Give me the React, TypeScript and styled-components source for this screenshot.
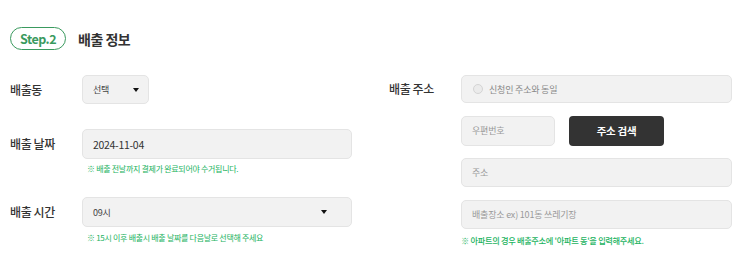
import React from "react";
import styled, { createGlobalStyle } from "styled-components";

const Global = createGlobalStyle`
  html, body { margin: 0; padding: 0; background: #fff; }
  body { font-family: "Noto Sans CJK KR", "Noto Sans", sans-serif; color: #333; }
  * { box-sizing: border-box; }
`;

const Page = styled.div`
  width: 750px;
  height: 258px;
  padding: 27px 18px 0 10px;
`;

const Header = styled.div`
  display: flex;
  align-items: center;
  gap: 12px;
  height: 23px;
`;

const StepPill = styled.div`
  width: 56px;
  height: 23px;
  border: 1.5px solid #3a9a5e;
  border-radius: 12px;
  color: #3a9a5e;
  font-size: 12.5px;
  font-weight: 600;
  letter-spacing: -0.5px;
  display: flex;
  align-items: center;
  justify-content: center;
`;

const Title = styled.h2`
  margin: 0;
  font-size: 14px;
  font-weight: 700;
  letter-spacing: -0.5px;
  color: #333;
`;

const Body = styled.div`
  margin-top: 25px;
  display: grid;
  grid-template-columns: 342px 343px;
  column-gap: 37px;
`;

const Column = styled.div`
  display: flex;
  flex-direction: column;
`;

const Row = styled.div<{ $mt?: number }>`
  display: flex;
  align-items: flex-start;
  margin-top: ${(p) => p.$mt ?? 0}px;
`;

const Label = styled.div<{ $h: number }>`
  width: 72px;
  flex: none;
  height: ${(p) => p.$h}px;
  line-height: ${(p) => p.$h}px;
  font-size: 12px;
  font-weight: 500;
  letter-spacing: -0.4px;
  color: #333;
`;

const Controls = styled.div<{ $gap?: number }>`
  flex: 1;
  display: flex;
  flex-direction: column;
  gap: ${(p) => p.$gap ?? 0}px;
`;

const Group = styled.div`
  display: flex;
  flex-direction: column;
`;

const Box = styled.div<{ $h: number; $w?: number }>`
  width: ${(p) => (p.$w ? `${p.$w}px` : "100%")};
  height: ${(p) => p.$h}px;
  background: #f2f2f2;
  border: 1px solid #e4e4e4;
  border-radius: 5px;
  display: flex;
  align-items: center;
  padding: 0 10px;
  font-size: 10.5px;
  letter-spacing: -0.3px;
  color: #333;
  flex: none;
`;

const SelectBox = styled(Box)<{ $arrowGap?: number }>`
  justify-content: space-between;
  padding: 0 ${(p) => 9 + (p.$arrowGap ?? 0)}px 0 10px;
`;

const SmallText = styled.span`
  font-size: 9px;
  color: #444;
`;

const Placeholder = styled.span<{ $dark?: boolean }>`
  font-size: 9px;
  color: ${(p) => (p.$dark ? "#888" : "#999")};
  letter-spacing: -0.2px;
`;

const Arrow = styled.span`
  width: 0;
  height: 0;
  border-left: 3.5px solid transparent;
  border-right: 3.5px solid transparent;
  border-top: 4px solid #111;
`;

const Helper = styled.div<{ $mt: number; $bold?: boolean; $pl?: number }>`
  margin-top: ${(p) => p.$mt}px;
  padding-left: ${(p) => p.$pl ?? 0}px;
  font-size: ${(p) => (p.$bold ? 8.2 : 8)}px;
  line-height: 12px;
  letter-spacing: -0.3px;
  color: #22b360;
  font-weight: ${(p) => (p.$bold ? 500 : 400)};
`;

const Radio = styled.span`
  width: 10px;
  height: 10px;
  border-radius: 50%;
  border: 1px solid #d4d4d4;
  background: #ebebeb;
  margin-right: 6px;
  margin-left: 1px;
`;

const ZipRow = styled.div`
  display: flex;
  gap: 14px;
`;

const SearchButton = styled.button`
  width: 95px;
  height: 30px;
  border: none;
  border-radius: 4px;
  background: #333;
  color: #fff;
  font-family: inherit;
  font-size: 10.5px;
  font-weight: 700;
  letter-spacing: -0.3px;
  padding: 0;
`;

export default function App() {
  return (
    <>
      <Global />
      <Page>
        <Header>
          <StepPill>Step.2</StepPill>
          <Title>배출 정보</Title>
        </Header>
        <Body>
          <Column>
            <Row>
              <Label $h={29}>배출동</Label>
              <Controls>
                <SelectBox $h={29} $w={67}>
                  <SmallText>선택</SmallText>
                  <Arrow />
                </SelectBox>
              </Controls>
            </Row>
            <Row $mt={25}>
              <Label $h={29}>배출 날짜</Label>
              <Controls>
                <Box $h={30}>2024-11-04</Box>
                <Helper $mt={4} $pl={5}>※ 배출 전날까지 결제가 완료되어야 수거됩니다.</Helper>
              </Controls>
            </Row>
            <Row $mt={22}>
              <Label $h={30}>배출 시간</Label>
              <Controls>
                <SelectBox $h={30} $w={270} $arrowGap={15}>
                  <SmallText>09시</SmallText>
                  <Arrow />
                </SelectBox>
                <Helper $mt={5} $pl={5}>※ 15시 이후 배출시 배출 날짜를 다음날로 선택해 주세요</Helper>
              </Controls>
            </Row>
          </Column>
          <Column>
            <Row>
              <Label $h={28}>배출 주소</Label>
              <Controls $gap={12.5}>
                <Box $h={28}>
                  <Radio />
                  <Placeholder $dark>신청인 주소와 동일</Placeholder>
                </Box>
                <ZipRow>
                  <Box $h={30} $w={94}>
                    <Placeholder>우편번호</Placeholder>
                  </Box>
                  <SearchButton>주소 검색</SearchButton>
                </ZipRow>
                <Box $h={29}>
                  <Placeholder>주소</Placeholder>
                </Box>
                <Group>
                  <Box $h={29}>
                    <Placeholder>배출장소 ex) 101동 쓰레기장</Placeholder>
                  </Box>
                  <Helper $mt={5} $bold>※ 아파트의 경우 배출주소에 '아파트 동'을 입력해주세요.</Helper>
                </Group>
              </Controls>
            </Row>
          </Column>
        </Body>
      </Page>
    </>
  );
}
